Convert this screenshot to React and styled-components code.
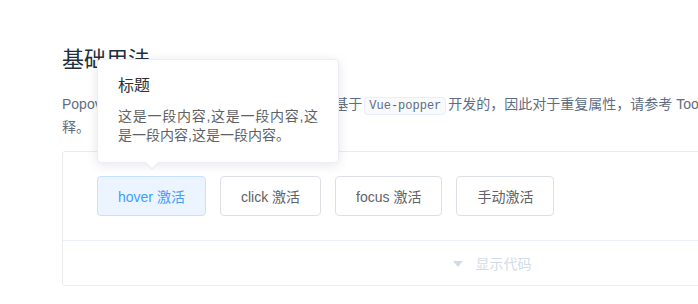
import React from "react";
import styled, { createGlobalStyle } from "styled-components";

const Global = createGlobalStyle`
  html, body { margin: 0; padding: 0; background: #fff; overflow: hidden; }
  body { font-family: "Liberation Sans", Arial, "Noto Sans CJK SC", sans-serif; }
`;

const Page = styled.div`
  width: 856px;
  padding: 45px 0 0 62px;
`;

const Heading = styled.h3`
  margin: 0;
  font-size: 22px;
  font-weight: 400;
  line-height: 30px;
  color: #1f2f3d;
`;

const Desc = styled.p`
  margin: 19px 0 13px;
  font-size: 14px;
  line-height: 21px;
  color: #5e6d82;
`;

const Code = styled.code`
  font-family: "Liberation Mono", "DejaVu Sans Mono", monospace;
  font-size: 12px;
  padding: 1px 4px;
  margin: 0 2px;
  background: #f9fafc;
  border: 1px solid #eaeefb;
  border-radius: 4px;
  color: #5e6d82;
`;

const DemoBlock = styled.div`
  border: 1px solid #ebebeb;
  border-radius: 3px;
`;

const Source = styled.div`
  padding: 24px 24px 24px 34px;
  display: flex;
  gap: 14px;
`;

const Anchor = styled.div`
  position: relative;
`;

const Button = styled.button`
  height: 40px;
  padding: 0 20px;
  font-family: inherit;
  font-size: 14px;
  border-radius: 4px;
  border: 1px solid ${p => (p.$active ? "#c6e2ff" : "#dcdfe6")};
  background: ${p => (p.$active ? "#ecf5ff" : "#fff")};
  color: ${p => (p.$active ? "#409eff" : "#606266")};
  cursor: pointer;
  white-space: nowrap;
`;

const Popover = styled.div`
  position: absolute;
  left: 0;
  bottom: calc(100% + 13px);
  width: 200px;
  padding: 18px 20px 16px;
  background: #fff;
  border: 1px solid #ebeef5;
  border-radius: 4px;
  box-shadow: 0 2px 12px 0 rgba(0, 0, 0, 0.1);
  color: #606266;
  font-size: 14px;
  line-height: 1.4;
  text-align: justify;
  z-index: 2;
  &::after {
    content: "";
    position: absolute;
    left: 48px;
    bottom: -6px;
    border-width: 6px 6px 0;
    border-style: solid;
    border-color: #fff transparent transparent;
  }
  &::before {
    content: "";
    position: absolute;
    left: 47px;
    bottom: -8px;
    border-width: 7px 7px 0;
    border-style: solid;
    border-color: #ebeef5 transparent transparent;
  }
`;

const PopTitle = styled.div`
  font-size: 16px;
  line-height: 1;
  color: #303133;
  margin-bottom: 13px;
`;

const Control = styled.div`
  height: 44px;
  border-top: 1px solid #eaeefb;
  display: flex;
  align-items: center;
  justify-content: center;
  gap: 13px;
  color: #d3dce6;
  font-size: 14px;
  padding-left: 4px;
`;

const Caret = styled.svg`
  width: 10px;
  height: 6px;
  fill: #d3dce6;
  margin-top: 2px;
`;

export default function App() {
  return (
    <>
      <Global />
      <Page>
        <Heading>基础用法</Heading>
        <Desc>
          Popover 的属性与 Tooltip 很类似，它们都是基于<Code>Vue-popper</Code>开发的，因此对于重复属性，请参考 Tooltip 的文档，在此文档中不做详尽解释。
        </Desc>
        <DemoBlock>
          <Source>
            <Anchor>
              <Popover>
                <PopTitle>标题</PopTitle>
                这是一段内容,这是一段内容,这是一段内容,这是一段内容。
              </Popover>
              <Button $active>hover 激活</Button>
            </Anchor>
            <Button>click 激活</Button>
            <Button>focus 激活</Button>
            <Button>手动激活</Button>
          </Source>
          <Control>
            <Caret viewBox="0 0 10 6"><path d="M0 0h10L5 6z" /></Caret>
            <span>显示代码</span>
          </Control>
        </DemoBlock>
      </Page>
    </>
  );
}
